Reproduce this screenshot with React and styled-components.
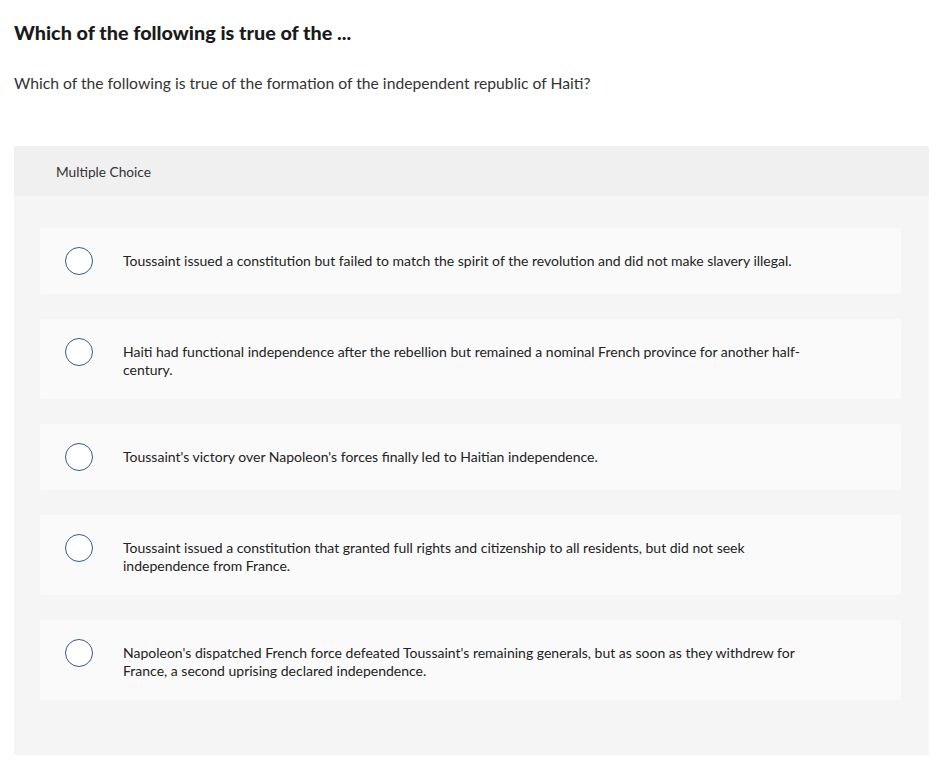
import React from "react";
import styled, { createGlobalStyle } from "styled-components";

const Global = createGlobalStyle`
  html, body { margin: 0; padding: 0; background: #ffffff; }
  body { font-family: Lato, "Open Sans", "Liberation Sans", sans-serif; color: #1a1a1a; }
  * { box-sizing: border-box; }
`;

const Page = styled.div`
  padding: 20px 12px 24px 14px;
`;

const Title = styled.h1`
  margin: 0;
  font-size: 19.8px;
  font-weight: 900;
  line-height: 24px;
  color: #1a1a1a;
`;

const Prompt = styled.p`
  margin: 29px 0 0 0;
  font-size: 15.7px;
  line-height: 20px;
  color: #333;
`;

const Panel = styled.section`
  margin-top: 53px;
  background: #f5f5f5;
  border-radius: 2px;
  overflow: hidden;
`;

const PanelHeader = styled.div`
  height: 50px;
  background: #f0f0f0;
  display: flex;
  align-items: center;
  padding-left: 42px;
  font-size: 13.7px;
  color: #333;
`;

const Options = styled.div`
  display: flex;
  flex-direction: column;
  gap: 25px;
  padding: 32px 28px 55px 26px;
`;

const Option = styled.label`
  display: flex;
  align-items: flex-start;
  background: #fafafa;
  border-radius: 2px;
  padding: 19px 88px 19px 25px;
  cursor: pointer;
`;

const Circle = styled.span`
  display: block;
  flex: 0 0 28px;
  width: 28px;
  height: 28px;
  margin-right: 30px;
  border-radius: 50%;
  border: 1.5px solid #2d5d8f;
  background: #ffffff;
`;

const OptionText = styled.span`
  margin: 5px 0 1px 0;
  font-size: 14px;
  line-height: 18px;
  color: #222;
`;

const choices = [
  "Toussaint issued a constitution but failed to match the spirit of the revolution and did not make slavery illegal.",
  "Haiti had functional independence after the rebellion but remained a nominal French province for another half-\u200Bcentury.",
  "Toussaint's victory over Napoleon's forces finally led to Haitian independence.",
  "Toussaint issued a constitution that granted full rights and citizenship to all residents, but did not seek independence from France.",
  "Napoleon's dispatched French force defeated Toussaint's remaining generals, but as soon as they withdrew for France, a second uprising declared independence.",
];

export default function App() {
  return (
    <>
      <Global />
      <Page>
        <Title>Which of the following is true of the ...</Title>
        <Prompt>Which of the following is true of the formation of the independent republic of Haiti?</Prompt>
        <Panel>
          <PanelHeader>Multiple Choice</PanelHeader>
          <Options>
            {choices.map((c, i) => (
              <Option key={i}>
                <Circle />
                <OptionText>{c}</OptionText>
              </Option>
            ))}
          </Options>
        </Panel>
      </Page>
    </>
  );
}
